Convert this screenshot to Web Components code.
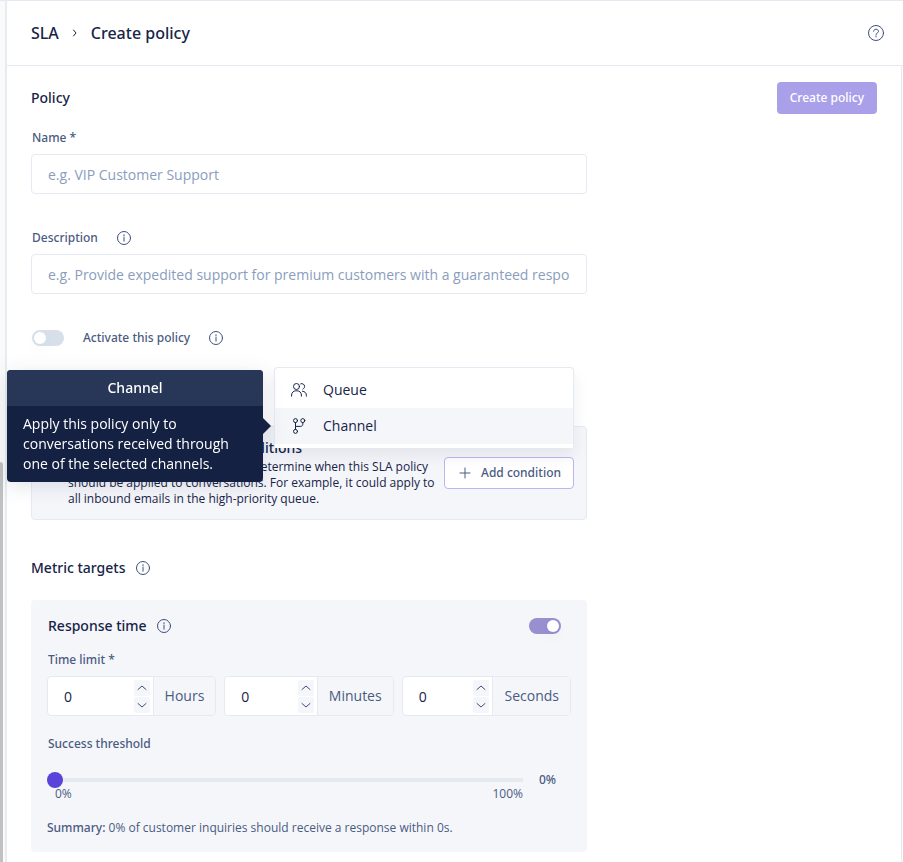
<!DOCTYPE html>
<html lang="en">
<head>
<meta charset="utf-8">
<title>SLA – Create policy</title>
<style>
:root{
  --ink:#172448; --ink-soft:#4a5b82; --placeholder:#8a9dbd; --line:#e5eaf2; --panel:#f5f6fa;
  --accent:#5844d8; --accent-soft:#aaa0ea; --navy:#142142; --navy-light:#283758;
  --label:500 12px/16px "Noto Sans","Open Sans",sans-serif;
  --heading:500 14px/20px "Noto Sans","Open Sans",sans-serif;
  --title:500 16px/24px "Noto Sans","Open Sans",sans-serif;
}
html,body{height:100%}
body{margin:0;background:#fff;color:var(--ink);font:400 14px/20px "Open Sans","Noto Sans",sans-serif}
</style>
</head>
<body>
<sla-app></sla-app>
<script>
const BASE = `*{box-sizing:border-box}button,input{font:inherit;color:inherit;margin:0}h1,h2,h3,p{margin:0}h2,h3{font:var(--heading)}`;

function define(name, html, css, setup) {
  const tpl = document.createElement('template');
  tpl.innerHTML = `<style>${BASE}${css}</style>${html}`;
  customElements.define(name, class extends HTMLElement {
    constructor() {
      super();
      this.attachShadow({mode: 'open'}).append(tpl.content.cloneNode(true));
    }
    connectedCallback() {
      if (setup && !this.ready) { this.ready = true; setup(this, this.shadowRoot); }
    }
  });
}

/* Line icons on a 16-unit grid */
const ICONS = {
  chevron: '<path d="M6.500 5 9 8l-2.500 3"/>',
  up: '<path d="M4 9.500 8 6l4 3.500"/>',
  down: '<path d="M4 6.500 8 10l4-3.500"/>',
  plus: '<path d="M8 3v10M3 8h10"/>',
  info: '<circle cx="8" cy="8" r="6.500"/><path d="M8 7v4.200M8 4.700v.9"/>',
  help: '<circle cx="8" cy="8" r="7.500"/><path d="M5.600 6.200C5.800 4.900 6.800 4.200 8 4.200c1.400 0 2.500.9 2.500 2.100C10.500 8 8 7.900 8 9.500M8 10.900v.9"/>',
  users: '<circle cx="5.500" cy="4.500" r="3"/><path d="M.6 14.200V13c0-2.300 1.900-4.200 4.200-4.200h1.400c2.300 0 4.200 1.900 4.200 4.200v1.200M9.700 1.800c1.800-.8 3.900.6 3.900 2.600 0 1.300-.7 2.200-1.700 2.700M11.500 9.200c2.300.1 3.900 1.900 3.900 4.100v.9"/>',
  branch: '<circle cx="4.500" cy="2.600" r="2"/><circle cx="11.800" cy="2.600" r="2"/><circle cx="4.500" cy="13.400" r="2"/><path d="M4.500 4.600v6.800M11.800 4.600v1.700c0 1.200-.9 2.100-2.100 2.100H4.500"/>'
};
define('ui-icon', '<svg viewBox="0 0 16 16" aria-hidden="true"></svg>',
  `:host{display:inline-flex;flex:none;width:16px;height:16px}
   svg{width:100%;height:100%;fill:none;stroke:currentColor;stroke-linecap:round;stroke-linejoin:round}`,
  (el, root) => { root.querySelector('svg').innerHTML = ICONS[el.getAttribute('name')]; });

define('info-tip', '<button type="button" aria-label="More information"><ui-icon name="info"></ui-icon></button>',
  `:host{display:inline-flex;color:#3d4f7a}button{display:flex;padding:0;border:0;background:none;cursor:pointer}`);

define('page-header',
  `<nav aria-label="Breadcrumb"><a href="#sla">SLA</a><ui-icon name="chevron"></ui-icon><h1>Create policy</h1></nav>
   <button type="button" aria-label="Help"><ui-icon name="help"></ui-icon></button>`,
  `:host{display:flex;align-items:center;justify-content:space-between;height:65px;padding:0 19px 0 24px;border-bottom:1px solid var(--line)}
   nav{display:flex;align-items:center;gap:8px;font:var(--title)}
   h1{font:var(--title)}a{color:inherit;text-decoration:none}
   button{display:flex;padding:0;border:0;background:none;color:#3d4f7a}`);

define('text-field',
  `<div class="top"><label for="f"></label><slot></slot></div><input id="f" type="text">`,
  `:host{display:grid;gap:8px}
   .top{display:flex;align-items:center;gap:18px;height:16px;padding-left:1px;font:var(--label);color:var(--ink-soft)}
   input{width:100%;height:40px;padding:0 16px;border:1px solid var(--line);border-radius:4px;background:#fff;font-size:14px}
   input::placeholder{color:var(--placeholder);opacity:1}`,
  (el, root) => {
    root.querySelector('label').textContent = el.getAttribute('label');
    root.querySelector('input').placeholder = el.getAttribute('placeholder');
  });

define('toggle-switch', `<input id="t" type="checkbox" role="switch"><label for="t"><slot></slot></label>`,
  `:host{display:flex;align-items:center;gap:19px;font:var(--label);color:var(--ink-soft)}
   input{appearance:none;flex:none;display:flex;width:32px;height:16px;padding:2px;border-radius:8px;background:#d7dfea}
   input::before{content:"";width:12px;height:12px;border-radius:50%;background:#fff;box-shadow:0 8px 16px rgba(20,33,66,.04)}
   input:checked{justify-content:flex-end;background:#978fd0}
   :host([bare]) label{display:none}`,
  (el, root) => {
    const box = root.querySelector('input');
    box.checked = el.hasAttribute('checked');
    if (el.hasAttribute('name')) box.setAttribute('aria-label', el.getAttribute('name'));
  });

define('help-bubble', `<div class="head"><slot name="title"></slot></div><div class="text"><slot></slot></div>`,
  `:host{display:block;position:absolute;right:calc(100% + 12px);top:50%;width:256px;transform:translateY(-50%);
     border-radius:4px;background:var(--navy);color:#fff;filter:drop-shadow(0 4px 10px rgba(20,33,66,.12));font-size:14px;line-height:20px}
   :host::after{content:"";position:absolute;left:100%;top:50%;margin-top:-8px;border:8px solid transparent;border-right:0;border-left-color:var(--navy)}
   .head{padding:8px 16px;border-radius:4px 4px 0 0;background:var(--navy-light);text-align:center;font:var(--heading)}
   .text{padding:8px 16px}`);

define('menu-item', `<button type="button" role="menuitem"><slot name="icon"></slot><slot></slot></button><slot name="bubble"></slot>`,
  `:host{display:block;position:relative}
   :host([active]){background:var(--panel)}
   button{display:flex;align-items:center;gap:16px;width:100%;height:36px;padding:0 16px;border:0;background:none;font-size:14px;text-align:left}`);

define('condition-menu', `<slot></slot>`,
  `:host{display:block;position:absolute;right:0;bottom:calc(100% + 9px);width:300px;padding:4px 0;border:1px solid var(--line);border-bottom:0;
     border-radius:4px 4px 0 0;background:#fff;box-shadow:0 8px 16px rgba(20,33,66,.08);z-index:2}`);

define('conditions-card',
  `<div class="copy"><h3>You have not added any conditions</h3>
   <p>Conditions can be added here to determine when this SLA policy should be applied to conversations. For example, it could apply to all inbound emails in the high-priority queue.</p></div>
   <div class="anchor"><button type="button" aria-haspopup="menu" aria-expanded="true"><ui-icon name="plus"></ui-icon>Add condition</button>
   <condition-menu role="menu">
     <menu-item><ui-icon slot="icon" name="users"></ui-icon>Queue</menu-item>
     <menu-item active><ui-icon slot="icon" name="branch"></ui-icon>Channel
       <help-bubble slot="bubble" role="tooltip"><span slot="title">Channel</span>Apply this policy only to conversations received through one of the selected channels.</help-bubble>
     </menu-item>
   </condition-menu></div>`,
  `:host{display:flex;align-items:center;gap:8px;padding:11px 12px 12px 36px;border:1px solid var(--line);border-radius:4px;background:var(--panel)}
   .copy{flex:1;min-width:0}
   p{font-size:12px;line-height:16px;padding-top:1px}
   .anchor{position:relative;flex:none}
   .anchor>button{display:flex;align-items:center;gap:8px;height:32px;padding:0 12px;border:1px solid #bdb4f2;border-radius:4px;background:#fff;font:var(--label);color:var(--ink-soft)}`);

define('unit-input',
  `<input id="n" type="number" min="0" value="0">
   <div class="spin"><button type="button" aria-label="Increase"><ui-icon name="up"></ui-icon></button><button type="button" aria-label="Decrease"><ui-icon name="down"></ui-icon></button></div>
   <label for="n"><slot></slot></label>`,
  `:host{display:flex;flex:1 1 0;min-width:0;height:40px;border:1px solid var(--line);border-radius:4px;background:#fff;overflow:hidden}
   input{flex:1;width:0;min-width:0;padding:2px 0 0 16px;border:0;background:none;appearance:textfield;font-size:14px}
   input::-webkit-inner-spin-button{appearance:none;margin:0}
   .spin{display:grid;gap:1px;margin:3px;flex:none;width:16px}
   .spin button{display:flex;align-items:center;justify-content:center;padding:0;border:0;border-radius:2px;background:var(--panel);color:#3d4f7a}
   label{display:flex;align-items:center;padding:0 11px;border-left:1px solid var(--line);background:var(--panel);color:var(--ink-soft);font-size:14px}`,
  (el, root) => {
    const input = root.querySelector('input'), [up, down] = root.querySelectorAll('button');
    up.onclick = () => input.stepUp();
    down.onclick = () => input.stepDown();
  });

define('threshold-slider',
  `<label for="r">Success threshold</label>
   <input id="r" type="range" min="0" max="100" value="0">
   <output for="r">0%</output>
   <div class="ends"><span>0%</span><span>100%</span></div>`,
  `:host{display:grid;grid-template-columns:1fr 32px;column-gap:16px;align-items:center;color:var(--ink-soft);font-size:12px;line-height:16px}
   label{grid-column:1/-1;font:var(--label);padding-left:1px;margin-bottom:20px}
   input{appearance:none;width:100%;height:16px;background:linear-gradient(#e5eaf1,#e5eaf1) center/100% 4px no-repeat;border-radius:2px}
   input::-webkit-slider-thumb{appearance:none;width:16px;height:16px;border-radius:50%;background:var(--accent)}
   output{font:var(--label)}
   .ends{display:flex;justify-content:space-between;padding-left:8px;margin-top:-2px}`,
  (el, root) => {
    const r = root.querySelector('input');
    r.oninput = () => { root.querySelector('output').textContent = r.value + '%'; };
  });

define('metric-card',
  `<div class="head"><h3>Response time</h3><info-tip></info-tip><toggle-switch bare checked name="Response time"></toggle-switch></div>
   <div class="limit">Time limit *</div>
   <div class="units"><unit-input>Hours</unit-input><unit-input>Minutes</unit-input><unit-input>Seconds</unit-input></div>
   <threshold-slider></threshold-slider>
   <p><b>Summary:</b> 0% of customer inquiries should receive a response within 0s.</p>`,
  `:host{display:block;padding:16px;border-radius:4px;background:var(--panel)}
   .head{display:flex;align-items:center;gap:9px;padding:0 10px 0 1px}
   toggle-switch{margin-left:auto}
   .limit{margin:16px 0 8px 1px;font:var(--label);color:var(--ink-soft)}
   .units{display:flex;gap:8px;margin-bottom:20px}
   p{margin-top:18px;font-size:12px;line-height:16px;color:var(--ink-soft)}
   b{font:var(--label)}`);

define('sla-app',
  `<aside><i></i></aside>
   <div class="page"><page-header></page-header>
   <main>
     <div class="title"><h2>Policy</h2><button type="button" disabled>Create policy</button></div>
     <form>
       <text-field label="Name *" placeholder="e.g. VIP Customer Support"></text-field>
       <text-field label="Description" placeholder="e.g. Provide expedited support for premium customers with a guaranteed response time"><info-tip></info-tip></text-field>
       <div class="row"><toggle-switch>Activate this policy</toggle-switch><info-tip></info-tip></div>
       <section><h2>Conditions</h2><conditions-card></conditions-card></section>
       <section><div class="row heading"><h2>Metric targets</h2><info-tip></info-tip></div><metric-card></metric-card></section>
     </form>
   </main></div>`,
  `:host{display:flex;min-height:100%;border-top:1px solid var(--line)}
   aside{display:flex;align-items:flex-end;width:7px;flex:none;background:#fafafa;border-right:2px solid #e7ecf3}
   aside i{width:3px;height:401px;border-radius:0 3px 0 0;background:#c1c1c1}
   .page{flex:1;min-width:0;display:flex;flex-direction:column}
   main{flex:1;margin-right:1px;padding:16px 24px 10px;border-right:1px solid var(--line)}
   .title{display:flex;align-items:center;justify-content:space-between;margin-bottom:16px}
   .title button{height:32px;padding:0 13px;border:0;border-radius:4px;background:var(--accent-soft);color:#fff;font:var(--label)}
   form{max-width:556px;display:grid;gap:36px}
   .row{display:flex;align-items:center;gap:18px;padding-left:1px}
   .heading{gap:9px;padding:0}
   section{display:grid;gap:22px;margin-top:2px}`);
</script>
</body>
</html>
